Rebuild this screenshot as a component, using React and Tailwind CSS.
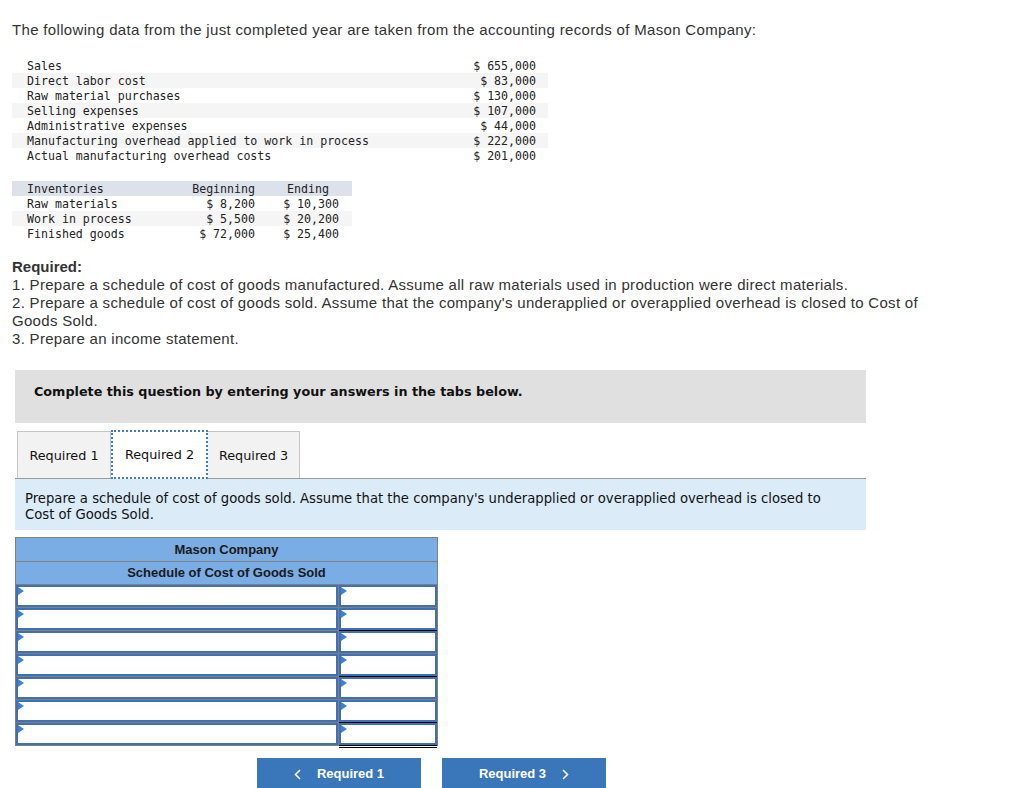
const mono = { fontFamily: '"DejaVu Sans Mono", "Liberation Mono", monospace' };

const facts = [
    ["Sales", "$ 655,000"],
    ["Direct labor cost", "$ 83,000"],
    ["Raw material purchases", "$ 130,000"],
    ["Selling expenses", "$ 107,000"],
    ["Administrative expenses", "$ 44,000"],
    ["Manufacturing overhead applied to work in process", "$ 222,000"],
    ["Actual manufacturing overhead costs", "$ 201,000"],
];

const inventories = [
    ["Raw materials", "$ 8,200", "$ 10,300"],
    ["Work in process", "$ 5,500", "$ 20,200"],
    ["Finished goods", "$ 72,000", "$ 25,400"],
];

// which amount cells get a total rule under them
const rules = ["", "single", "", "single", "", "single", "double"];

const InputCell = ({ rule }) => {
    const ruleCls =
        rule === "single"
            ? "shadow-[0_1px_0_#000]"
            : rule === "double"
            ? "shadow-[0_1px_0_#000,0_2px_0_#fff,0_3px_0_#000]"
            : "";
    return (
        <div className={`relative h-[22px] bg-white border-2 border-[#3f70b4] ${ruleCls}`}>
            <span className="absolute top-0 left-0 w-0 h-0 border-y-[4px] border-y-transparent border-l-[6px] border-l-[#3b82d6]" />
        </div>
    );
};

const Chevron = ({ dir }) => (
    <svg width="7" height="11" viewBox="0 0 7 11" fill="none" stroke="white" strokeWidth="1.6">
        {dir === "left" ? <path d="M6 1 L1.5 5.5 L6 10" /> : <path d="M1 1 L5.5 5.5 L1 10" />}
    </svg>
);

export default function App() {
    const sans = { fontFamily: '"Liberation Sans", Arial, sans-serif' };
    const verdana = { fontFamily: '"DejaVu Sans", Verdana, sans-serif' };

    return (
        <div className="min-h-screen bg-white text-[#333] px-[12px] pt-[21px]" style={sans}>
            {/* Intro */}
            <p className="text-[15px] leading-[18px] tracking-[0.33px]">
                The following data from the just completed year are taken from the accounting records of Mason Company:
            </p>

            {/* Cost data */}
            <div className="mt-[19px] w-[536px] text-[11.6px] text-[#222]" style={mono}>
                {facts.map(([label, value], i) => (
                    <div
                        key={label}
                        className={`flex justify-between h-[15px] leading-[17px] pl-[15px] pr-[12px] ${
                            i % 2 === 1 ? "bg-[#f5f5f5]" : ""
                        }`}
                    >
                        <span>{label}</span>
                        <span>{value}</span>
                    </div>
                ))}
            </div>

            {/* Inventories */}
            <div className="mt-[18px] w-[340px] text-[11.6px] text-[#222]" style={mono}>
                <div className="grid grid-cols-[179px_64px_97px] h-[15px] leading-[17px] bg-[#dde1ea]">
                    <span className="pl-[15px]">Inventories</span>
                    <span className="text-right">Beginning</span>
                    <span className="text-right pr-[23px]">Ending</span>
                </div>
                {inventories.map(([label, begin, end], i) => (
                    <div
                        key={label}
                        className={`grid grid-cols-[179px_64px_97px] h-[15px] leading-[17px] ${
                            i === 1 ? "bg-[#f5f5f5]" : ""
                        }`}
                    >
                        <span className="pl-[15px]">{label}</span>
                        <span className="text-right">{begin}</span>
                        <span className="text-right pr-[13px]">{end}</span>
                    </div>
                ))}
            </div>

            {/* Requirements */}
            <div className="mt-[17px] text-[15px] leading-[18px] tracking-[0.3px]">
                <p className="font-bold tracking-normal">Required:</p>
                <p>1. Prepare a schedule of cost of goods manufactured. Assume all raw materials used in production were direct materials.</p>
                <p>
                    2. Prepare a schedule of cost of goods sold. Assume that the company's underapplied or overapplied overhead is closed to Cost of
                    <br />
                    Goods Sold.
                </p>
                <p>3. Prepare an income statement.</p>
            </div>

            <div className="ml-[3px] w-[851px]">
                {/* Instructions banner */}
                <div className="mt-[22px] h-[53px] bg-[#e0e0e0] pl-[19px] pt-[15px]">
                    <p className="text-[12.75px] leading-[14px] font-bold text-[#111]" style={verdana}>
                        Complete this question by entering your answers in the tabs below.
                    </p>
                </div>

                {/* Tabs */}
                <div className="mt-[7px] flex items-end pl-[2px] border-b border-[#9a9a9a]" style={verdana}>
                    <div className="w-[94px] h-[47px] flex items-center justify-center pt-px bg-[#f2f2f2] border border-b-0 border-[#c6c6c6] text-[12.8px] text-[#111]">
                        Required 1
                    </div>
                    <div className="w-[97px] h-[49px] flex items-center justify-center pt-px bg-white border-2 border-dotted border-[#3d7cc9] -mb-px text-[12.8px] text-[#111]">
                        Required 2
                    </div>
                    <div className="w-[92px] h-[47px] flex items-center justify-center pt-px bg-[#f2f2f2] border border-b-0 border-l-0 border-[#c6c6c6] text-[12.8px] text-[#111]">
                        Required 3
                    </div>
                </div>

                <div className="h-[51px] bg-[#dbebf8] pl-[10px] pt-[12px] text-[13.2px] leading-[16px] text-[#111]" style={verdana}>
                    Prepare a schedule of cost of goods sold. Assume that the company's underapplied or overapplied overhead is closed to
                    <br />
                    Cost of Goods Sold.
                </div>

                {/* Schedule worksheet */}
                <div className="mt-[7px] w-[423px] bg-[#7f7f7f] p-px flex flex-col gap-px">
                    <div className="h-[23px] bg-[#79ade4] flex items-center justify-center text-[13px] font-bold text-[#1a1a1a]">
                        Mason Company
                    </div>
                    <div className="h-[22px] bg-[#79ade4] flex items-center justify-center text-[13px] font-bold text-[#1a1a1a]">
                        Schedule of Cost of Goods Sold
                    </div>
                    {rules.map((rule, i) => (
                        <div key={i} className="grid grid-cols-[322px_1fr] gap-px">
                            <InputCell />
                            <InputCell rule={rule} />
                        </div>
                    ))}
                </div>
            </div>

            {/* Navigation */}
            <div className="mt-[12px] flex gap-[21px] pl-[245px]">
                <button className="w-[164px] h-[32px] bg-[#3a77ba] text-white text-[13px] font-bold flex items-center justify-center gap-[16px]">
                    <Chevron dir="left" />
                    Required 1
                </button>
                <button className="w-[164px] h-[32px] bg-[#3a77ba] text-white text-[13px] font-bold flex items-center justify-center gap-[16px]">
                    Required 3
                    <Chevron dir="right" />
                </button>
            </div>
        </div>
    );
}
